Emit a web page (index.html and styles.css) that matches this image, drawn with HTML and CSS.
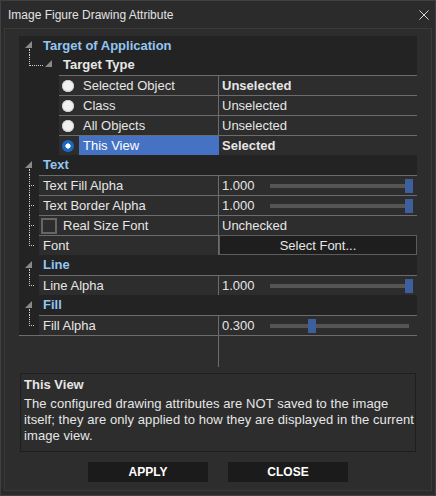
FILE: index.html
```html
<!DOCTYPE html>
<html>
<head>
<meta charset="utf-8">
<link rel="stylesheet" href="styles.css">
</head>
<body>
<div class="window">
  <div class="titlebar">
    <span class="title">Image Figure Drawing Attribute</span>
    <svg class="close" width="10" height="10" viewBox="0 0 10 10"><path d="M0.5 0.5L9.5 9.5M9.5 0.5L0.5 9.5" stroke="#d8d8d8" stroke-width="1" fill="none"/></svg>
  </div>
  <div class="panel">
    <div class="grid">
      <div class="row cat first">
        <div class="g cg"><svg class="tri" width="7" height="7" viewBox="0 0 7 7"><polygon points="7,0 7,7 0,7" fill="#8a8a8a"/></svg><div class="stub"></div></div>
        <div class="cat-label">Target of Application</div>
      </div>
      <div class="row cat">
        <div class="g g40h"><div class="conn-l"></div><svg class="tri tri2" width="7" height="7" viewBox="0 0 7 7"><polygon points="7,0 7,7 0,7" fill="#8a8a8a"/></svg></div>
        <div class="cat-label white">Target Type</div>
      </div>
      <div class="row">
        <div class="g g40"></div>
        <div class="pc">
          <div class="lab radio-lab"><span class="rcell"><span class="radio"></span></span><span class="txt">Selected Object</span></div>
          <div class="val bold">Unselected</div>
        </div>
      </div>
      <div class="row">
        <div class="g g40"></div>
        <div class="pc">
          <div class="lab radio-lab"><span class="rcell"><span class="radio"></span></span><span class="txt">Class</span></div>
          <div class="val">Unselected</div>
        </div>
      </div>
      <div class="row">
        <div class="g g40"></div>
        <div class="pc">
          <div class="lab radio-lab"><span class="rcell"><span class="radio"></span></span><span class="txt">All Objects</span></div>
          <div class="val">Unselected</div>
        </div>
      </div>
      <div class="row">
        <div class="g g40"></div>
        <div class="pc">
          <div class="lab radio-lab sel"><span class="rcell"><span class="radio on"></span></span><span class="txt">This View</span></div>
          <div class="val bold">Selected</div>
        </div>
      </div>
      <div class="row cat">
        <div class="g cg"><svg class="tri" width="7" height="7" viewBox="0 0 7 7"><polygon points="7,0 7,7 0,7" fill="#8a8a8a"/></svg><div class="stub"></div></div>
        <div class="cat-label">Text</div>
      </div>
      <div class="row">
        <div class="g g20"><div class="up"></div><div class="down"></div></div>
        <div class="pc">
          <div class="lab">Text Fill Alpha</div>
          <div class="val"><span class="num">1.000</span><span class="track"><span class="thumb" style="left:135px"></span></span></div>
        </div>
      </div>
      <div class="row">
        <div class="g g20"><div class="up"></div><div class="down"></div></div>
        <div class="pc">
          <div class="lab">Text Border Alpha</div>
          <div class="val"><span class="num">1.000</span><span class="track"><span class="thumb" style="left:135px"></span></span></div>
        </div>
      </div>
      <div class="row">
        <div class="g g20"><div class="up"></div><div class="down"></div></div>
        <div class="pc">
          <div class="lab check-lab"><span class="checkbox"></span><span>Real Size Font</span></div>
          <div class="val">Unchecked</div>
        </div>
      </div>
      <div class="row last">
        <div class="g g20"><div class="up"></div><div class="down"></div></div>
        <div class="pc">
          <div class="lab">Font</div>
          <div class="val btn-cell"><div class="select-btn">Select Font...</div></div>
        </div>
      </div>
      <div class="row cat">
        <div class="g cg"><svg class="tri" width="7" height="7" viewBox="0 0 7 7"><polygon points="7,0 7,7 0,7" fill="#8a8a8a"/></svg><div class="stub"></div></div>
        <div class="cat-label">Line</div>
      </div>
      <div class="row last">
        <div class="g g20"><div class="up"></div><div class="down"></div></div>
        <div class="pc">
          <div class="lab">Line Alpha</div>
          <div class="val"><span class="num">1.000</span><span class="track"><span class="thumb" style="left:135px"></span></span></div>
        </div>
      </div>
      <div class="row cat">
        <div class="g cg"><svg class="tri" width="7" height="7" viewBox="0 0 7 7"><polygon points="7,0 7,7 0,7" fill="#8a8a8a"/></svg><div class="stub"></div></div>
        <div class="cat-label">Fill</div>
      </div>
      <div class="row last">
        <div class="g g20"><div class="up"></div><div class="down"></div></div>
        <div class="pc">
          <div class="lab">Fill Alpha</div>
          <div class="val"><span class="num">0.300</span><span class="track"><span class="thumb" style="left:37.7px"></span></span></div>
        </div>
      </div>
      <div class="filler"><div class="filler-div"></div></div>
    </div>
    <div class="desc">
      <div class="desc-title">This View</div>
      <div class="desc-text">The configured drawing attributes are NOT saved to the image<br>itself; they are only applied to how they are displayed in the current<br>image view.</div>
    </div>
    <div class="buttons">
      <div class="btn">APPLY</div>
      <div class="btn">CLOSE</div>
    </div>
  </div>
</div>
</body>
</html>
```
FILE: styles.css
```css
* { box-sizing: border-box; }
html, body { margin: 0; padding: 0; background: #2b2b2b; }
body {
  font-family: "Liberation Sans", Arial, sans-serif;
  font-size: 13px;
  color: #e6e6e6;
}
.window {
  width: 436px;
  height: 496px;
  border: 1px solid #404040;
  background: #2b2b2b;
  display: flex;
  flex-direction: column;
}
.titlebar {
  height: 27px;
  flex-shrink: 0;
  display: flex;
  align-items: center;
  justify-content: space-between;
  padding: 1px 6px 0 7px;
  font-size: 12px;
  color: #e2e2e2;
}
.close { display: block; }
.panel {
  flex: 1;
  margin: 0 3px 4px 3px;
  border: 1px solid #3a3a3a;
  background: #2d2d2d;
  padding: 7px 14px 8px 14px;
  display: flex;
  flex-direction: column;
}
.grid {
  height: 331px;
  flex-shrink: 0;
  display: flex;
  flex-direction: column;
}
.row {
  display: flex;
  height: 20px;
  flex-shrink: 0;
}
.row.first { height: 19px; }
.cat { background: #232323; }
.g { background: #232323; flex-shrink: 0; }
.cg {
  width: 20px;
  display: flex;
  flex-direction: column;
}
.tri { display: block; flex-shrink: 0; margin: 6px 0 0 6px; }
.first .tri { margin-top: 5px; }
.stub {
  flex: 1;
  margin: 1px 0 0 10px;
  border-left: 1px dotted #cccccc;
}
.g40h {
  width: 40px;
  display: flex;
  align-items: flex-start;
}
.conn-l {
  margin-left: 10px;
  width: 14px;
  height: 11px;
  flex-shrink: 0;
  border-left: 1px dotted #cccccc;
  border-bottom: 1px dotted #cccccc;
}
.tri2 { margin: 5px 0 0 2px; }
.cat-label {
  padding-left: 4px;
  line-height: 20px;
  font-weight: bold;
  color: #92c6f2;
  white-space: nowrap;
}
.first .cat-label { line-height: 19px; }
.cat-label.white { color: #e8e8e8; }
.g40 { width: 40px; }
.g20 {
  width: 20px;
  display: flex;
  flex-direction: column;
}
.up {
  margin-left: 10px;
  width: 5px;
  height: 11px;
  border-left: 1px dotted #cccccc;
  border-bottom: 1px dotted #cccccc;
}
.down {
  flex: 1;
  margin-left: 10px;
  border-left: 1px dotted #cccccc;
}
.last .down { border-left: none; }
.pc {
  flex: 1;
  min-width: 0;
  display: flex;
  border-top: 1px solid #6c6c6c;
  background: #2d2d2d;
}
.lab {
  flex: 1;
  min-width: 0;
  display: flex;
  align-items: center;
  padding-left: 4px;
  border-right: 1px solid #6c6c6c;
  white-space: nowrap;
}
.radio-lab { padding-left: 0; align-items: stretch; }
.rcell {
  width: 20px;
  flex-shrink: 0;
  display: flex;
  align-items: center;
  padding-left: 3px;
}
.radio {
  width: 12px;
  height: 12px;
  border-radius: 50%;
  background: #f0f0f0;
  box-shadow: inset 0 0 0 1px #cfcfcf;
}
.radio.on {
  background: radial-gradient(circle, #ffffff 0 2.3px, #1b68c4 2.9px);
  box-shadow: none;
}
.txt {
  flex: 1;
  display: flex;
  align-items: center;
  padding-left: 4px;
}
.sel { border-right-color: #4672c4; }
.sel .txt { background: #4672c4; color: #ffffff; }
.check-lab { padding-left: 2px; }
.checkbox {
  width: 16px;
  height: 16px;
  flex-shrink: 0;
  border: 2px solid #666666;
  background: #2d2d2d;
  margin-right: 6px;
}
.val {
  width: 198px;
  flex-shrink: 0;
  display: flex;
  align-items: center;
  padding-left: 3px;
  white-space: nowrap;
}
.bold { font-weight: bold; }
.num { width: 48px; flex-shrink: 0; }
.track {
  position: relative;
  width: 139px;
  height: 4px;
  background: #555555;
  flex-shrink: 0;
}
.thumb {
  position: absolute;
  top: -5px;
  width: 8px;
  height: 14px;
  background: #3e5f9d;
}
.btn-cell { padding-left: 0; align-items: flex-start; }
.select-btn {
  margin-top: -1px;
  width: 198px;
  height: 20px;
  border: 1px solid #5c5c5c;
  background: #1e1e1e;
  display: flex;
  align-items: center;
  justify-content: center;
  color: #e6e6e6;
}
.filler {
  flex: 1;
  border-top: 1px solid #6c6c6c;
}
.filler-div {
  margin-left: 199px;
  width: 1px;
  height: 100%;
  background: #6c6c6c;
}
.desc {
  margin: 6px 1px 0 1px;
  height: 79px;
  flex-shrink: 0;
  border: 1px solid #1f1f1f;
  padding: 3px 4px 0 3px;
  line-height: 16px;
  color: #e6e6e6;
}
.desc-title { font-weight: bold; margin-bottom: 3px; }
.desc-text { white-space: nowrap; letter-spacing: 0.08px; }
.buttons {
  margin-top: 10px;
  display: flex;
  justify-content: center;
  gap: 20px;
}
.btn {
  width: 120px;
  height: 20px;
  background: #1b1b1b;
  color: #ffffff;
  font-weight: bold;
  font-size: 12px;
  display: flex;
  align-items: center;
  justify-content: center;
}
```
